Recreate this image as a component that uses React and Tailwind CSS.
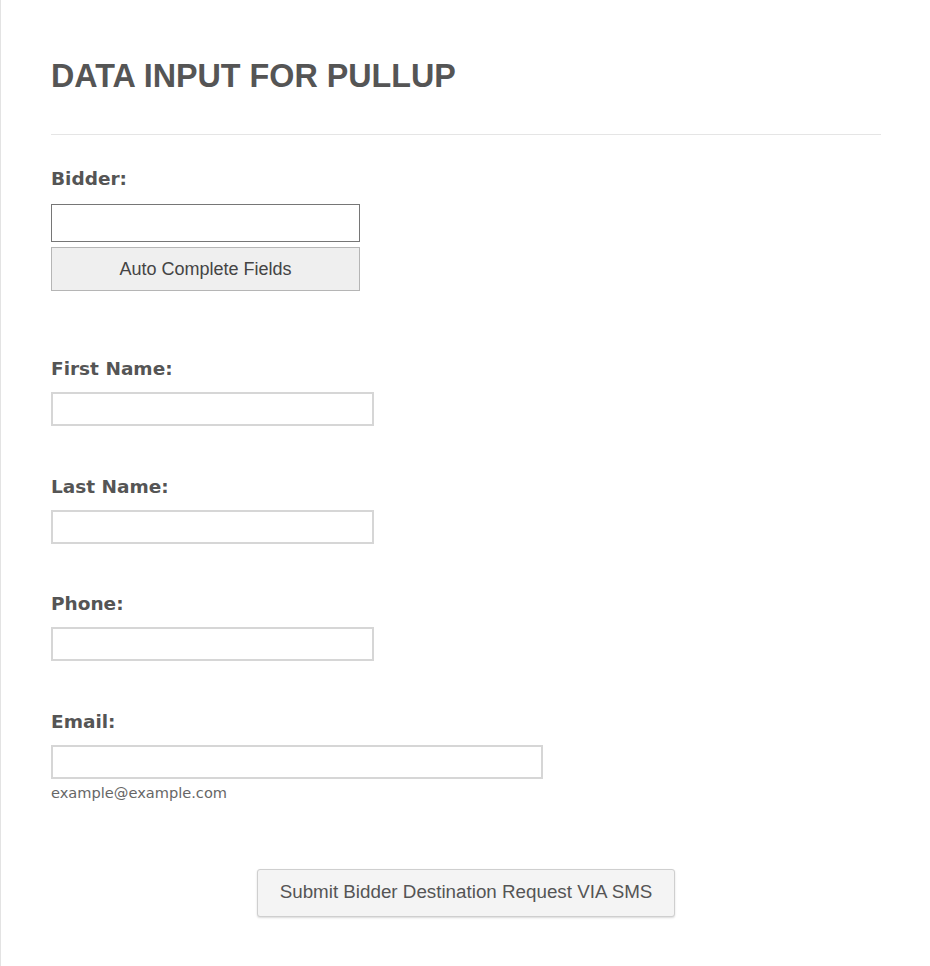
export default function App() {
  const fields = [
    { label: "First Name:", w: "w-[323px]" },
    { label: "Last Name:", w: "w-[323px]" },
    { label: "Phone:", w: "w-[323px]" },
  ];
  return (
    <div className="min-h-[966px] bg-white border-l border-[#e3e3e3] font-['DejaVu_Sans',sans-serif] text-[#555]">
      <div className="pl-[50px] pr-[49px] pt-[56px]">
        <h1 className="font-['Liberation_Sans',Arial,sans-serif] font-bold text-[32.3px] leading-[40px] text-[#555]">
          DATA INPUT FOR PULLUP
        </h1>
        <div className="mt-[38px] border-t border-[#e5e5e5]" />

        <div className="mt-[33px]">
          <label className="block font-bold text-[18.5px] leading-[22px]">Bidder:</label>
          <input className="block mt-[14px] w-[309px] h-[38px] border border-[#767676] bg-white" />
          <button className="block mt-[5px] w-[309px] h-[44px] bg-[#efefef] border border-[#b5b5b5] font-['Liberation_Sans',Arial,sans-serif] text-[18px] text-[#444]">
            Auto Complete Fields
          </button>
        </div>

        <div className="mt-[67px] flex flex-col gap-[49.5px]">
          {fields.map((f) => (
            <div key={f.label}>
              <label className="block font-bold text-[18.5px] leading-[22px]">{f.label}</label>
              <input className={`block mt-[12px] ${f.w} h-[34px] border-2 border-[#d6d6d6] bg-white`} />
            </div>
          ))}
          <div>
            <label className="block font-bold text-[18.5px] leading-[22px]">Email:</label>
            <input className="block mt-[12px] w-[492px] h-[34px] border-2 border-[#d6d6d6] bg-white" />
            <div className="mt-[4px] text-[14.6px] leading-[20px] text-[#666]">example@example.com</div>
          </div>
        </div>

        <div className="mt-[66px] flex justify-center">
          <button className="w-[418px] h-[48px] bg-[#f4f4f4] border border-[#cfcfcf] rounded-[3px] shadow-[0_1px_2px_rgba(0,0,0,0.15)] font-['Liberation_Sans',Arial,sans-serif] text-[18.8px] text-[#555]">
            Submit Bidder Destination Request VIA SMS
          </button>
        </div>
      </div>
    </div>
  );
}
